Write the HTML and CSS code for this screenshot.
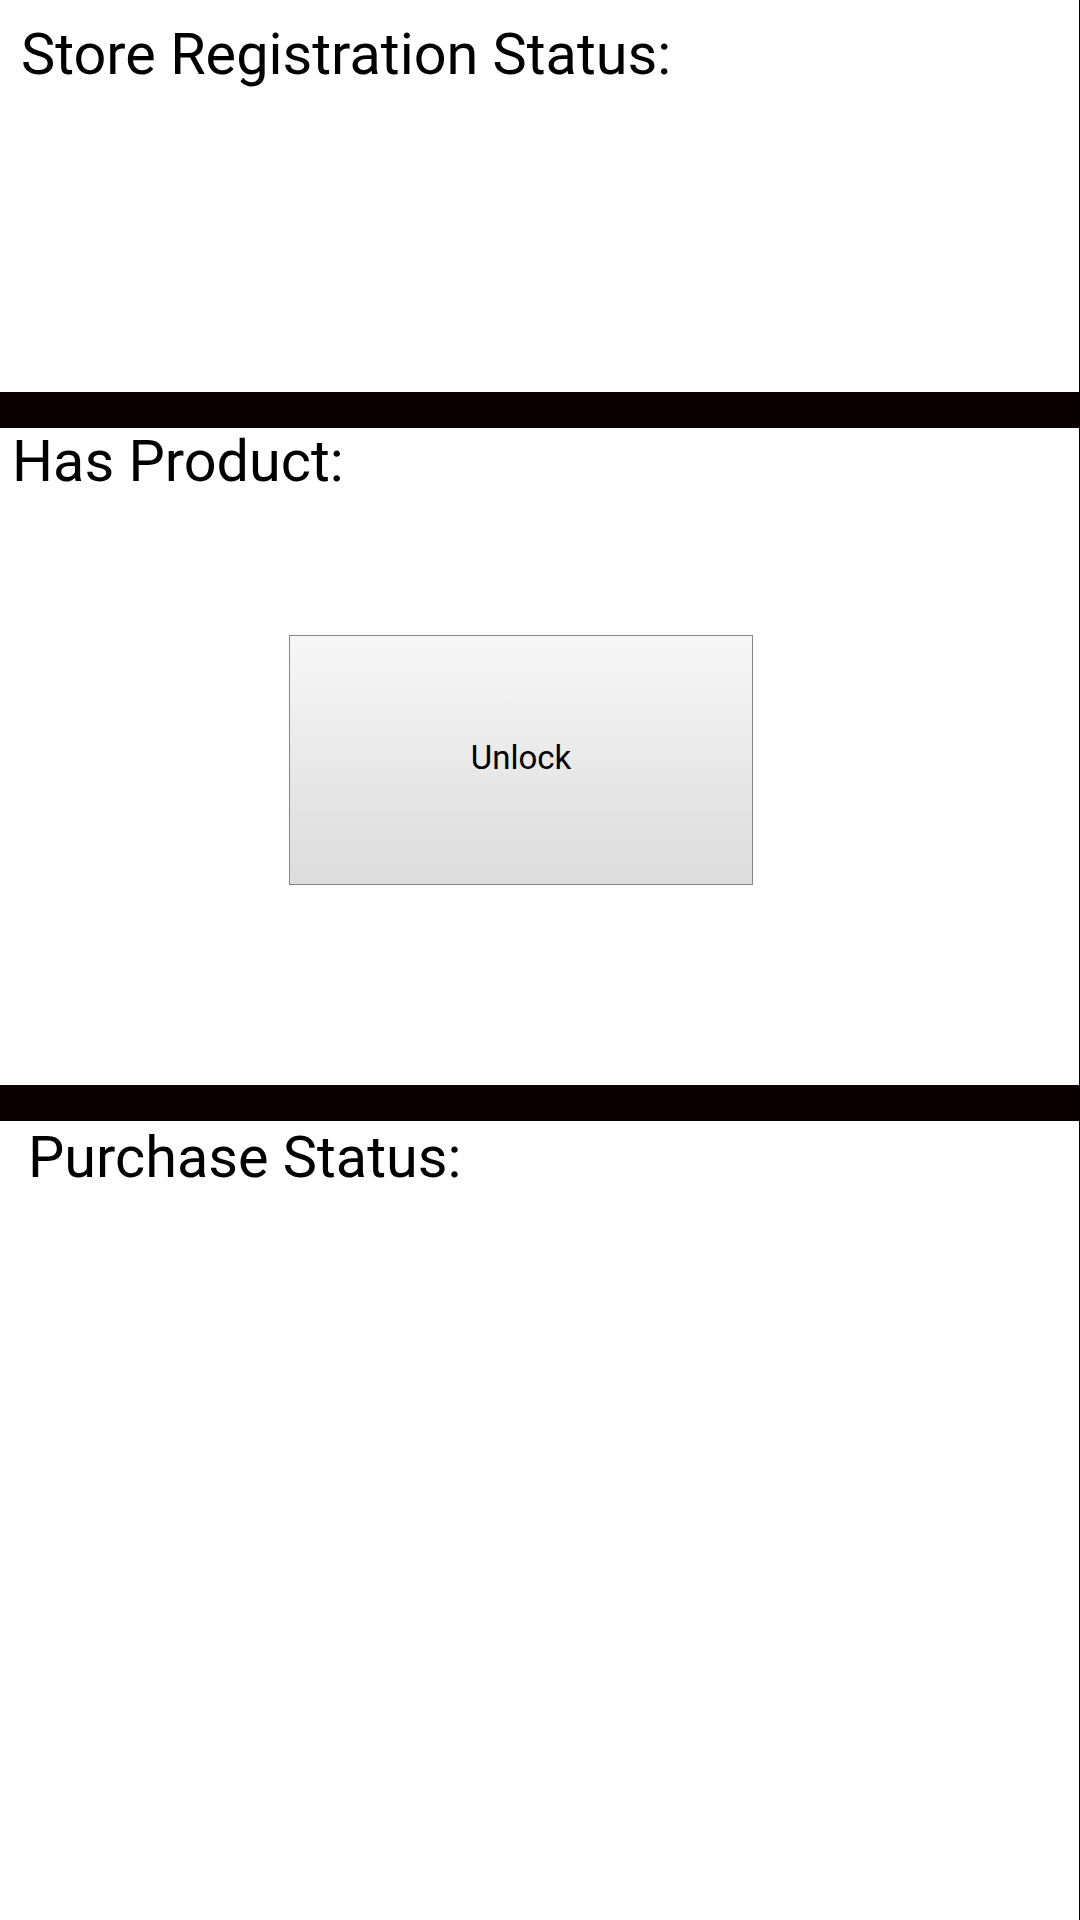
FILE: index.html
```html
<!DOCTYPE html>
<html lang="en">

<head>
    <meta charset="UTF-8">
    <meta name="viewport" content="width=device-width, initial-scale=1.0">
    <title>Store</title>
    <link rel="stylesheet" href="styles.css">
</head>

<body>
    <div id="container">
        <div id="register" class="section">
            <p class="label">Store Registration Status:</p>
        </div>
        <div class="divider"></div>
        <div id="product" class="section">
            <p class="label">Has Product:</p>
            <button id="unlock-btn">Unlock</button>
        </div>
        <div class="divider"></div>
        <div id="purchase" class="section">
            <p class="label">Purchase Status:</p>
        </div>
    </div>
</body>

</html>
```

FILE: styles.css
```css
    html, body {
        margin: 0;
        padding: 0;
        background-color: #fff;
    }

    body {
        font-family: Roboto, "Liberation Sans", Arial, sans-serif;
        color: #000;
    }

    #container {
        width: 1080px;
        height: 1920px;
        box-sizing: border-box;
        border-right: 1px solid #000;
        display: flex;
        flex-direction: column;
    }

    .section {
        display: flex;
        flex-direction: column;
    }

    .label {
        margin: 0;
        font-size: 57.6px;
        line-height: 58px;
    }

    .divider {
        height: 36px;
        flex-shrink: 0;
        background-color: #0b0000;
    }

    #register {
        height: 392px;
        padding: 26px 0 0 21px;
        box-sizing: border-box;
    }

    #product {
        height: 657px;
        padding: 5px 0 0 12px;
        box-sizing: border-box;
    }

    #purchase {
        flex: 1;
        padding: 8px 0 0 28px;
    }

    #unlock-btn {
        width: 464px;
        height: 250px;
        margin: 144px 0 0 277px;
        border: 1px solid #848484;
        border-radius: 0;
        background: linear-gradient(to bottom, #f7f7f7, #dcdcdc);
        font-family: Roboto, "Liberation Sans", Arial, sans-serif;
        font-size: 33px;
        color: #000;
        padding: 0 0 5px;
    }
```
